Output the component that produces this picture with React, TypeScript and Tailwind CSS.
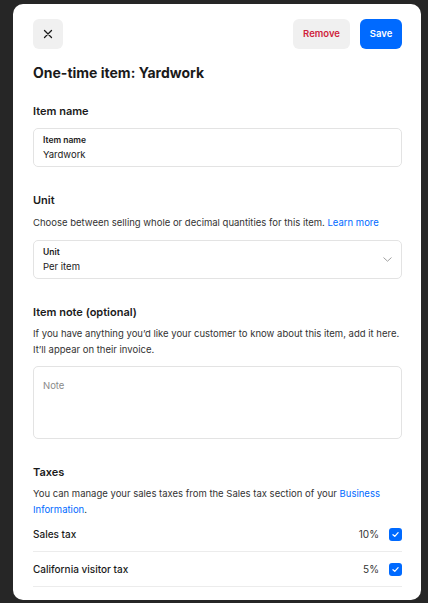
import React from "react";

function Check() {
  return (
    <span className="flex h-[13px] w-[13px] items-center justify-center rounded-[3px] bg-[#006aff]">
      <svg width="9" height="9" viewBox="0 0 10 10" fill="none">
        <path d="M2.2 5.3 L4.2 7.1 L7.9 3" stroke="white" strokeWidth="1.4" strokeLinecap="round" strokeLinejoin="round" />
      </svg>
    </span>
  );
}

export default function App() {
  return (
    <div className="min-h-[603px] w-[428px] bg-[#262626] pt-[4px] pl-[13px]" style={{ fontFamily: "Inter, 'Noto Sans', sans-serif" }}>
      <div className="flex h-[596px] w-[408px] flex-col overflow-hidden rounded-[10px] bg-white pt-[15px] pr-[19px] pl-[20px] text-[#1a1a1a]">
        <div className="flex items-center justify-between">
          <button className="flex h-[30px] w-[30px] items-center justify-center rounded-[6px] bg-[#f0f0f0]">
            <svg width="10" height="10" viewBox="0 0 10 10" fill="none">
              <path d="M1.5 1.5 L8.5 8.5 M8.5 1.5 L1.5 8.5" stroke="#1a1a1a" strokeWidth="1.3" strokeLinecap="round" />
            </svg>
          </button>
          <div className="flex gap-[10px]">
            <button className="h-[30px] w-[57px] rounded-[6px] bg-[#f0f0f0] text-[9.5px] font-semibold text-[#cf1f3c]">Remove</button>
            <button className="h-[30px] w-[42px] rounded-[6px] bg-[#006aff] text-[9.5px] font-semibold text-white">Save</button>
          </div>
        </div>

        <h1 className="mt-[14px] text-[14px] leading-[20px] font-bold">One-time item: Yardwork</h1>

        <h2 className="mt-[19px] text-[11px] leading-[18px] font-semibold">Item name</h2>
        <div className="mt-[8px] h-[39px] rounded-[5px] border border-[#e3e3e3] px-[9px] pt-[5px]">
          <div className="text-[8.5px] leading-[12px] font-semibold">Item name</div>
          <div className="mt-[1px] text-[9.5px] leading-[16px]">Yardwork</div>
        </div>

        <h2 className="mt-[24px] text-[11px] leading-[18px] font-semibold">Unit</h2>
        <p className="mt-[6px] text-[9.5px] leading-[16px] text-[#333333]">
          Choose between selling whole or decimal quantities for this item. <span className="text-[#006aff]">Learn more</span>
        </p>
        <div className="mt-[9px] flex h-[39px] items-start justify-between rounded-[5px] border border-[#e3e3e3] pt-[5px] pr-[9px] pl-[9px]">
          <div>
            <div className="text-[8.5px] leading-[12px] font-semibold">Unit</div>
            <div className="mt-[1px] text-[9.5px] leading-[16px]">Per item</div>
          </div>
          <svg className="mt-[11px]" width="9" height="5" viewBox="0 0 9 5" fill="none">
            <path d="M0.8 0.8 L4.5 4.2 L8.2 0.8" stroke="#a0a0a0" strokeWidth="1" strokeLinecap="round" strokeLinejoin="round" />
          </svg>
        </div>

        <h2 className="mt-[24px] text-[11px] leading-[18px] font-semibold">Item note (optional)</h2>
        <p className="mt-[5px] text-[9.5px] leading-[16px] text-[#333333]">
          If you have anything you’d like your customer to know about this item, add it here. It’ll appear on their invoice.
        </p>
        <div className="mt-[8px] h-[73px] rounded-[5px] border border-[#e3e3e3] px-[9px] pt-[11px]">
          <div className="text-[9.5px] leading-[16px] text-[#8a8a8a]">Note</div>
        </div>

        <h2 className="mt-[24px] text-[11px] leading-[18px] font-semibold">Taxes</h2>
        <p className="mt-[5px] text-[9.5px] leading-[16px] text-[#333333]">
          You can manage your sales taxes from the Sales tax section of your <span className="text-[#006aff]">Business</span>{" "}
          <span className="text-[#006aff]">Information</span>.
        </p>
        <div className="flex h-[34px] items-center justify-between border-b border-[#ececec]">
          <span className="text-[10px] font-medium">Sales tax</span>
          <div className="flex items-center gap-[10px]">
            <span className="text-[10px] text-[#333333]">10%</span>
            <Check />
          </div>
        </div>
        <div className="flex h-[35px] items-center justify-between border-b border-[#ececec]">
          <span className="text-[10px] font-medium">California visitor tax</span>
          <div className="flex items-center gap-[10px]">
            <span className="text-[10px] text-[#333333]">5%</span>
            <Check />
          </div>
        </div>
      </div>
    </div>
  );
}
